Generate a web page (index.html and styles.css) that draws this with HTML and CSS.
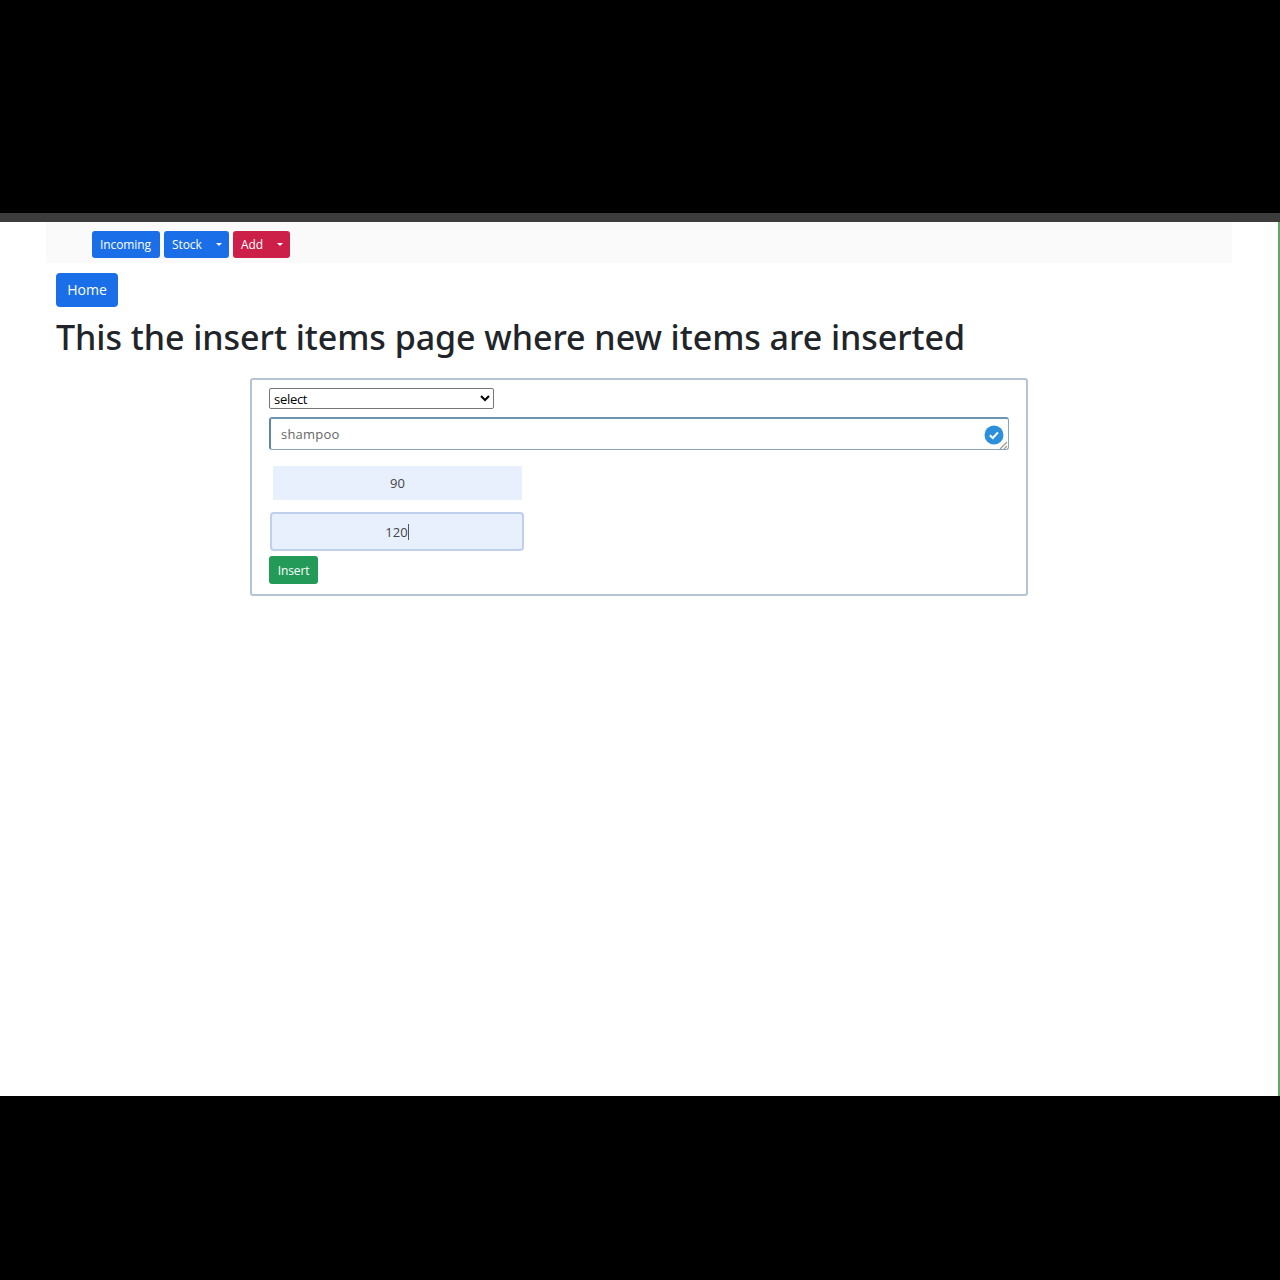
FILE: index.html
```html
<!DOCTYPE html>
<html>
<head>
  <title>Insert Items</title>
  <link rel="stylesheet" href="styles.css">
</head>
<body>
  <div class="letterbox-top"></div>
  <div class="browser-bar"></div>

  <div class="page">
    <nav class="navbar">
      <button type="button" class="btn btn-blue btn-incoming">Incoming</button>
      <button type="button" class="btn btn-blue btn-stock">Stock<span class="caret"></span></button>
      <button type="button" class="btn btn-red btn-add">Add<span class="caret"></span></button>
    </nav>

    <div class="content">
      <a class="btn-home" href="#">Home</a>
      <h1>This the insert items page where new items are inserted</h1>

      <form class="insert-form">
        <select class="item-select">
          <option>select</option>
        </select>

        <div class="name-box">
          <input type="text" class="name-input" value="shampoo">
          <svg class="check-icon" width="20" height="20" viewBox="0 0 20 20">
            <circle cx="10" cy="10" r="9.5" fill="#2b8fdc"/>
            <path d="M5.8 10.2l3 2.8 5.2-5.6" fill="none" stroke="#fff" stroke-width="2"/>
          </svg>
          <svg class="resize-icon" width="10" height="10" viewBox="0 0 10 10">
            <path d="M9 2L2 9M9 6L6 9" fill="none" stroke="#9a9a8c" stroke-width="1.2"/>
          </svg>
        </div>

        <input type="text" class="num-input" value="90">
        <div class="num-focus">
          <span class="num-value">120</span><span class="text-cursor"></span>
        </div>

        <button type="button" class="btn btn-green">Insert</button>
      </form>
    </div>
  </div>

  <div class="letterbox-bottom"></div>
</body>
</html>
```

FILE: styles.css
```css
body {
  font-family: "Open Sans", "Noto Sans", Arial, sans-serif;
  background-color: #000;
  color: #212529;
  margin: 0;
  padding: 0;
}

.letterbox-top {
  height: 213px;
  background-color: #000;
}

.browser-bar {
  height: 9px;
  background-color: #3c3c3c;
}

.page {
  height: 874px;
  background-color: #fff;
  border-right: 2px solid #5fa868;
  box-sizing: border-box;
  overflow: hidden;
}

.letterbox-bottom {
  height: 184px;
  background-color: #000;
}

.navbar {
  display: flex;
  align-items: center;
  height: 41px;
  margin-left: 46px;
  width: 1186px;
  padding: 3px 0 0 46px;
  box-sizing: border-box;
  background-color: #fafafb;
}

.btn {
  display: flex;
  align-items: center;
  height: 27px;
  padding: 0 8px;
  border: none;
  border-radius: 3px;
  color: #fff;
  font-family: inherit;
  font-size: 12px;
  letter-spacing: -0.1px;
}

.btn-blue {
  background-color: #1a6fe8;
}

.btn-red {
  background-color: #cc2049;
}

.btn-green {
  background-color: #249a58;
  width: 49px;
  height: 28px;
  justify-content: center;
  margin-top: 5px;
}

.btn-incoming {
  width: 68px;
  margin-right: 4px;
}

.btn-stock {
  width: 65px;
  margin-right: 4px;
}

.btn-add {
  width: 57px;
}

.caret {
  width: 0;
  height: 0;
  margin-left: auto;
  margin-right: -1px;
  border-top: 3px solid #fff;
  border-left: 3px solid transparent;
  border-right: 3px solid transparent;
}

.content {
  padding: 10px 56px 0;
}

.btn-home {
  display: inline-block;
  background-color: #1a6fe8;
  color: #fff;
  width: 62px;
  height: 34px;
  line-height: 34px;
  text-align: center;
  border-radius: 4px;
  font-size: 14px;
  text-decoration: none;
}

h1 {
  font-family: "Noto Sans", "Open Sans", Arial, sans-serif;
  font-size: 34px;
  font-weight: 500;
  line-height: 40px;
  margin: 10px 0 21px;
  letter-spacing: -0.05px;
  white-space: nowrap;
}

.insert-form {
  display: flex;
  flex-direction: column;
  align-items: flex-start;
  width: 778px;
  height: 218px;
  margin-left: 194px;
  padding: 8px 17px 0;
  box-sizing: border-box;
  border: 2px solid #b4c4d2;
  border-radius: 3px;
}

.item-select {
  width: 225px;
  height: 21px;
  font-family: inherit;
  font-size: 13px;
  letter-spacing: -0.3px;
  background-color: #fff;
  border: 1px solid #767676;
  border-radius: 2px;
}

.name-box {
  position: relative;
  width: 740px;
  height: 33px;
  margin-top: 8px;
}

.name-input {
  width: 100%;
  height: 100%;
  padding: 0 10px;
  box-sizing: border-box;
  border: 1px solid #8aa6bd;
  border-left: 2px solid #5d87a6;
  border-top: 2px solid #6d95b3;
  border-radius: 3px;
  font-family: inherit;
  font-size: 13px;
  letter-spacing: 0.2px;
  color: #666;
}

.check-icon {
  position: absolute;
  right: 5px;
  top: 8px;
}

.resize-icon {
  position: absolute;
  right: 1px;
  bottom: 0;
}

.num-input {
  width: 249px;
  height: 34px;
  margin: 16px 0 0 4px;
  border: none;
  padding: 0;
  box-sizing: border-box;
  background-color: #e8f0fe;
  text-align: center;
  font-family: inherit;
  font-size: 13px;
  color: #444;
}

.num-focus {
  display: flex;
  align-items: center;
  justify-content: center;
  width: 254px;
  height: 39px;
  margin: 12px 0 0 1px;
  box-sizing: border-box;
  background-color: #e8f0fe;
  border: 2px solid #c0d0ea;
  border-radius: 4px;
  font-size: 13px;
  color: #444;
}

.text-cursor {
  width: 1px;
  height: 16px;
  background-color: #555;
}
```
